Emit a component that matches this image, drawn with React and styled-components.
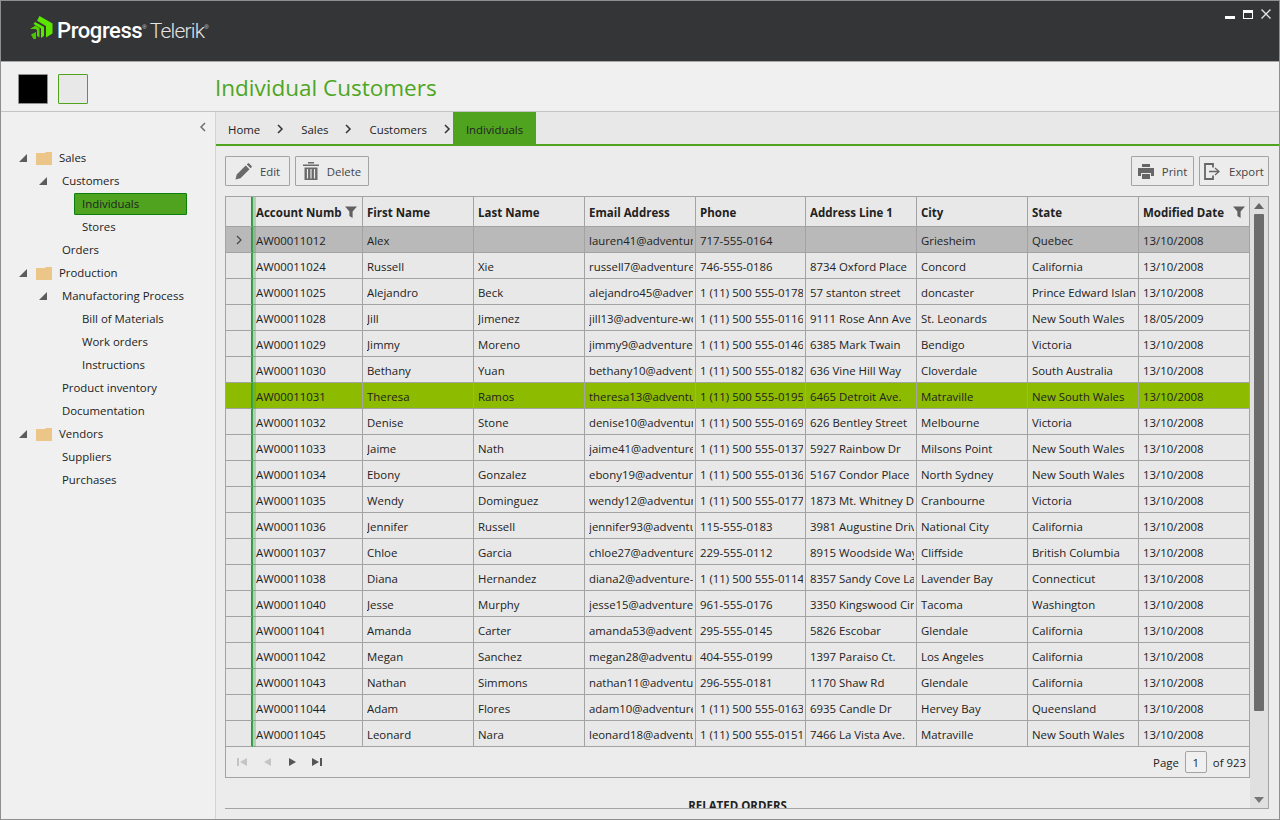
import React from "react";
import styled, { createGlobalStyle } from "styled-components";

const GlobalStyle = createGlobalStyle`
  html, body {
    margin: 0;
    padding: 0;
    height: 100%;
    overflow: hidden;
    background: #f0f0f0;
  }
  body, input, button {
    font-family: "Open Sans", "Noto Sans", sans-serif;
  }
`;

const WindowFrame = styled.div`
  width: 1280px;
  height: 820px;
  box-sizing: border-box;
  border: 1px solid #8f8f8f;
  display: flex;
  flex-direction: column;
  overflow: hidden;
  background: #f0f0f0;
`;

const TitleBar = styled.header`
  height: 60px;
  flex: none;
  background: #343537;
  display: flex;
  align-items: flex-start;
  justify-content: space-between;
`;

const Logo = styled.div`
  display: flex;
  align-items: flex-start;
  margin: 15px 0 0 29px;
  color: #fff;
`;

const LogoProgress = styled.span`
  font-family: "Roboto", "Liberation Sans", sans-serif;
  font-size: 22px;
  line-height: 30px;
  font-weight: 500;
  letter-spacing: -0.4px;
  margin-left: 4px;
`;

const LogoTelerik = styled.span`
  font-family: "Roboto", "Liberation Sans", sans-serif;
  font-size: 21px;
  line-height: 30px;
  font-weight: 300;
  letter-spacing: -0.8px;
  margin-left: 3px;
  color: #e4e4e4;
`;

const LogoMark = styled.span`
  font-family: "Liberation Sans", sans-serif;
  font-size: 6px;
  color: #d8d8d8;
  margin: 8px 0 0 0;
  line-height: 1;
`;

const WindowButtons = styled.div`
  display: flex;
  align-items: center;
  gap: 6px;
  margin: 7px 7px 0 0;
`;

const HeaderBand = styled.div`
  height: 51px;
  flex: none;
  box-sizing: border-box;
  border-top: 1px solid #a8a8a8;
  border-bottom: 1px solid #c4c4c4;
  display: flex;
  align-items: center;
  padding: 5px 0 0 17px;
`;

const Swatch = styled.div`
  width: 30px;
  height: 30px;
  box-sizing: border-box;
  border: 1px solid ${(p) => p.$border};
  border-radius: 1px;
  background: ${(p) => p.$color};
  margin-right: 10px;
`;

const PageTitle = styled.h1`
  margin: -2px 0 0 117px;
  font-size: 22.5px;
  font-weight: 400;
  color: #4ea61e;
  line-height: 1;
`;

const Body = styled.div`
  flex: 1;
  min-height: 0;
  display: flex;
`;

const Sidebar = styled.aside`
  width: 215px;
  flex: none;
  box-sizing: border-box;
  border-right: 1px solid #d4d4d4;
  padding-top: 34px;
  position: relative;
  background: #f0f0f0;
`;

const CollapseButton = styled.div`
  position: absolute;
  top: 10px;
  right: 8px;
  display: flex;
`;

const TreeRow = styled.div`
  height: 23px;
  display: flex;
  align-items: center;
  padding-left: ${(p) => p.$indent}px;
  font-size: 11.4px;
  color: #222;
`;

const TreeArrow = styled.svg`
  width: 8px;
  height: 8px;
  flex: none;
  margin-right: ${(p) => p.$gap}px;
`;

const FolderIcon = styled.svg`
  width: 16px;
  height: 14px;
  flex: none;
  margin-right: 7px;
`;

const SelectedTree = styled.div`
  width: 113px;
  height: 22px;
  box-sizing: border-box;
  border: 1px solid #0b7f0b;
  background: #4fa31e;
  padding-left: 7px;
  display: flex;
  align-items: center;
  border-radius: 1px;
`;

const Main = styled.main`
  flex: 1;
  min-width: 0;
  display: flex;
  flex-direction: column;
  background: #ececec;
`;

const Breadcrumb = styled.nav`
  height: 34px;
  flex: none;
  box-sizing: border-box;
  background: #e8e8e8;
  border-bottom: 2px solid #4fa31e;
  display: flex;
  align-items: stretch;
  padding-left: 12px;
  font-size: 11.4px;
  color: #222;
`;

const Crumb = styled.div`
  display: flex;
  align-items: center;
  padding-top: 2px;
  margin-right: ${(p) => p.$gap}px;
`;

const CrumbChevron = styled.svg`
  width: 8px;
  height: 10px;
  margin-left: 16px;
`;

const ActiveCrumb = styled.div`
  background: #4fa31e;
  width: 83px;
  padding-top: 2px;
  display: flex;
  align-items: center;
  justify-content: center;
`;

const Toolbar = styled.div`
  height: 30px;
  flex: none;
  margin: 10px 10px 0 9px;
  display: flex;
  justify-content: space-between;
`;

const ToolGroup = styled.div`
  display: flex;
  gap: 5px;
`;

const ToolButton = styled.button`
  height: 30px;
  width: ${(p) => p.$width}px;
  box-sizing: border-box;
  padding: 0;
  border: 1px solid #a3a3a3;
  border-radius: 1px;
  background: #ececec;
  color: #444;
  font-size: 11.4px;
  display: flex;
  align-items: center;
  justify-content: center;
  gap: 8px;
`;

const ScrollViewer = styled.div`
  margin: 10px 0 0 9px;
  width: 1044px;
  height: 613px;
  flex: none;
  box-sizing: border-box;
  border-top: 1px solid #a3a3a3;
  border-right: 1px solid #a3a3a3;
  border-bottom: 1px solid #a3a3a3;
  display: flex;
  overflow: hidden;
`;

const ScrollContent = styled.div`
  width: 1025px;
  flex: none;
  display: flex;
  flex-direction: column;
  min-height: 0;
`;

const GridFrame = styled.div`
  height: 581px;
  flex: none;
  box-sizing: border-box;
  border-left: 1px solid #a3a3a3;
  border-right: 1px solid #a3a3a3;
  border-bottom: 1px solid #a3a3a3;
  display: flex;
  flex-direction: column;
`;

const Row = styled.div`
  display: flex;
  height: 26px;
  flex: none;
  box-sizing: border-box;
  border-bottom: 1px solid #a3a3a3;
  background: ${(p) => p.$bg || "#e8e8e8"};
  color: #222;
  font-size: 11.4px;
`;

const HeaderRow = styled(Row)`
  height: 30px;
  font-size: 11.5px;
  font-weight: 700;
  background: #e8e8e8;
`;

const IndicatorCell = styled.div`
  width: 26px;
  flex: none;
  box-sizing: border-box;
  border-right: 1px solid #2e9a3e;
  display: flex;
  align-items: center;
  justify-content: center;
`;

const Cell = styled.div`
  width: ${(p) => p.$width}px;
  flex: none;
  box-sizing: border-box;
  border-right: ${(p) => (p.$last ? "0" : "1px solid #a3a3a3")};
  padding: 1px 2px 0 4px;
  display: flex;
  align-items: center;
  white-space: nowrap;
  position: relative;

  ${(p) =>
    p.$frozen &&
    `&::before {
      content: "";
      position: absolute;
      left: 0;
      top: 0;
      bottom: -1px;
      width: 3px;
      border-left: 1px solid #3fa04f;
      background: rgba(60, 170, 70, 0.33);
    }`}
`;

const CellText = styled.span`
  display: block;
  flex: 1;
  min-width: 0;
  overflow: hidden;
`;

const FilterIcon = styled.svg`
  width: 12px;
  height: 12px;
  flex: none;
  margin: 0 3px;
`;

const Pager = styled.div`
  flex: 1;
  display: flex;
  align-items: center;
  justify-content: space-between;
  padding: 0 3px 0 10px;
  font-size: 11.4px;
  color: #222;
`;

const PagerButtons = styled.div`
  display: flex;
  gap: 13px;
`;

const PageInfo = styled.div`
  display: flex;
  align-items: center;
  gap: 4px;
`;

const PageInput = styled.div`
  width: 22px;
  height: 22px;
  box-sizing: border-box;
  border: 1px solid #a3a3a3;
  border-radius: 2px;
  background: #f0f0f0;
  display: flex;
  align-items: center;
  justify-content: center;
  margin: 0 2px;
`;

const RelatedLabel = styled.div`
  margin-top: 20px;
  text-align: center;
  font-size: 11.5px;
  line-height: 16px;
  font-weight: 700;
  color: #222;
`;

const Scrollbar = styled.div`
  width: 18px;
  flex: none;
  background: #e0e0e0;
  display: flex;
  flex-direction: column;
  align-items: center;
  padding-top: 6px;
  box-sizing: border-box;
`;

const ScrollThumb = styled.div`
  width: 10px;
  height: 497px;
  margin-top: 5px;
  background: #6c6c6c;
  border-radius: 1px;
`;

const ScrollDown = styled.div`
  margin-top: auto;
  margin-bottom: 5px;
  display: flex;
`;

const columns = [
  ["Account Numb", 111, true],
  ["First Name", 111],
  ["Last Name", 111],
  ["Email Address", 111],
  ["Phone", 110],
  ["Address Line 1", 111],
  ["City", 111],
  ["State", 111],
  ["Modified Date", 111, true],
];

const rows = [
  ["AW00011012", "Alex", "", "lauren41@adventure-works.com", "717-555-0164", "", "Griesheim", "Quebec", "13/10/2008"],
  ["AW00011024", "Russell", "Xie", "russell7@adventure-works.com", "746-555-0186", "8734 Oxford Place", "Concord", "California", "13/10/2008"],
  ["AW00011025", "Alejandro", "Beck", "alejandro45@adventure-works.com", "1 (11) 500 555-0178", "57 stanton street", "doncaster", "Prince Edward Island", "13/10/2008"],
  ["AW00011028", "Jill", "Jimenez", "jill13@adventure-works.com", "1 (11) 500 555-0116", "9111 Rose Ann Ave", "St. Leonards", "New South Wales", "18/05/2009"],
  ["AW00011029", "Jimmy", "Moreno", "jimmy9@adventure-works.com", "1 (11) 500 555-0146", "6385 Mark Twain", "Bendigo", "Victoria", "13/10/2008"],
  ["AW00011030", "Bethany", "Yuan", "bethany10@adventure-works.com", "1 (11) 500 555-0182", "636 Vine Hill Way", "Cloverdale", "South Australia", "13/10/2008"],
  ["AW00011031", "Theresa", "Ramos", "theresa13@adventure-works.com", "1 (11) 500 555-0195", "6465 Detroit Ave.", "Matraville", "New South Wales", "13/10/2008"],
  ["AW00011032", "Denise", "Stone", "denise10@adventure-works.com", "1 (11) 500 555-0169", "626 Bentley Street", "Melbourne", "Victoria", "13/10/2008"],
  ["AW00011033", "Jaime", "Nath", "jaime41@adventure-works.com", "1 (11) 500 555-0137", "5927 Rainbow Dr", "Milsons Point", "New South Wales", "13/10/2008"],
  ["AW00011034", "Ebony", "Gonzalez", "ebony19@adventure-works.com", "1 (11) 500 555-0136", "5167 Condor Place", "North Sydney", "New South Wales", "13/10/2008"],
  ["AW00011035", "Wendy", "Dominguez", "wendy12@adventure-works.com", "1 (11) 500 555-0177", "1873 Mt. Whitney Dr", "Cranbourne", "Victoria", "13/10/2008"],
  ["AW00011036", "Jennifer", "Russell", "jennifer93@adventure-works.com", "115-555-0183", "3981 Augustine Drive", "National City", "California", "13/10/2008"],
  ["AW00011037", "Chloe", "Garcia", "chloe27@adventure-works.com", "229-555-0112", "8915 Woodside Way", "Cliffside", "British Columbia", "13/10/2008"],
  ["AW00011038", "Diana", "Hernandez", "diana2@adventure-works.com", "1 (11) 500 555-0114", "8357 Sandy Cove Lane", "Lavender Bay", "Connecticut", "13/10/2008"],
  ["AW00011040", "Jesse", "Murphy", "jesse15@adventure-works.com", "961-555-0176", "3350 Kingswood Circle", "Tacoma", "Washington", "13/10/2008"],
  ["AW00011041", "Amanda", "Carter", "amanda53@adventure-works.com", "295-555-0145", "5826 Escobar", "Glendale", "California", "13/10/2008"],
  ["AW00011042", "Megan", "Sanchez", "megan28@adventure-works.com", "404-555-0199", "1397 Paraiso Ct.", "Los Angeles", "California", "13/10/2008"],
  ["AW00011043", "Nathan", "Simmons", "nathan11@adventure-works.com", "296-555-0181", "1170 Shaw Rd", "Glendale", "California", "13/10/2008"],
  ["AW00011044", "Adam", "Flores", "adam10@adventure-works.com", "1 (11) 500 555-0163", "6935 Candle Dr", "Hervey Bay", "Queensland", "13/10/2008"],
  ["AW00011045", "Leonard", "Nara", "leonard18@adventure-works.com", "1 (11) 500 555-0151", "7466 La Vista Ave.", "Matraville", "New South Wales", "13/10/2008"],
];

const tree = [
  { label: "Sales", indent: 18, arrow: true, folder: true },
  { label: "Customers", indent: 38, arrow: true, gap: 15 },
  { label: "Individuals", indent: 73, selected: true },
  { label: "Stores", indent: 81 },
  { label: "Orders", indent: 61 },
  { label: "Production", indent: 18, arrow: true, folder: true },
  { label: "Manufactoring Process", indent: 38, arrow: true, gap: 15 },
  { label: "Bill of Materials", indent: 81 },
  { label: "Work orders", indent: 81 },
  { label: "Instructions", indent: 81 },
  { label: "Product inventory", indent: 61 },
  { label: "Documentation", indent: 61 },
  { label: "Vendors", indent: 18, arrow: true, folder: true },
  { label: "Suppliers", indent: 61 },
  { label: "Purchases", indent: 61 },
];

function Filter() {
  return (
    <FilterIcon viewBox="0 0 12 12">
      <path d="M0 0.5h12L7.6 5.6V12L4.4 10V5.6z" fill="#5f5f5f" />
    </FilterIcon>
  );
}

function Chevron() {
  return (
    <CrumbChevron viewBox="0 0 8 10">
      <path d="M2 1l4 4-4 4" fill="none" stroke="#333" strokeWidth="1.5" />
    </CrumbChevron>
  );
}

function PageButton({ d, color }) {
  return (
    <svg width="12" height="12" viewBox="0 0 12 12">
      <path d={d} fill={color} />
    </svg>
  );
}

export default function App() {
  return (
    <WindowFrame>
      <GlobalStyle />
      <TitleBar>
        <Logo>
          <svg width="23" height="24" viewBox="0 0 23 24">
            <path d="M9.5 0L22.5 7.5V17.5L16 21.5V10L7 4.8z" fill="#5ce500" />
            <path d="M5 6L14 11V20L11 22V12.5L3.5 8z" fill="#5ce500" />
            <path d="M0 13L5.5 9.5L9.5 12V21.5L7 20V14L5.5 13z" fill="#52d400" />
            <path d="M1 18.5L6 16V23H3.5z" fill="#4bc400" />
          </svg>
          <LogoProgress>Progress</LogoProgress>
          <LogoMark>®</LogoMark>
          <LogoTelerik>Telerik</LogoTelerik>
          <LogoMark>®</LogoMark>
        </Logo>
        <WindowButtons>
          <svg width="12" height="12" viewBox="0 0 12 12">
            <rect x="1" y="8" width="10" height="3" fill="#fff" />
          </svg>
          <svg width="12" height="12" viewBox="0 0 12 12">
            <rect x="1.5" y="2.5" width="9" height="8" fill="none" stroke="#fff" />
            <rect x="1" y="2" width="10" height="3" fill="#fff" />
          </svg>
          <svg width="12" height="12" viewBox="0 0 12 12">
            <path d="M1.5 1.5l9 9M10.5 1.5l-9 9" stroke="#e8e8e8" strokeWidth="1.3" />
          </svg>
        </WindowButtons>
      </TitleBar>
      <HeaderBand>
        <Swatch $color="#000" $border="#8f8f8f" />
        <Swatch $color="#e8e8e8" $border="#4fa31e" />
        <PageTitle>Individual Customers</PageTitle>
      </HeaderBand>
      <Body>
        <Sidebar>
          <CollapseButton>
            <svg width="8" height="10" viewBox="0 0 8 10">
              <path d="M6 1L2 5l4 4" fill="none" stroke="#666" strokeWidth="1.4" />
            </svg>
          </CollapseButton>
          {tree.map((item) => (
            <TreeRow key={item.label} $indent={item.indent}>
              {item.arrow && (
                <TreeArrow viewBox="0 0 8 8" $gap={item.gap || 9}>
                  <path d="M8 0v8H0z" fill="#5c5c5c" />
                </TreeArrow>
              )}
              {item.folder && (
                <FolderIcon viewBox="0 0 16 14">
                  <path d="M0 2h9l1-1h6v13H0z" fill="#ecc688" />
                </FolderIcon>
              )}
              {item.selected ? <SelectedTree>{item.label}</SelectedTree> : item.label}
            </TreeRow>
          ))}
        </Sidebar>
        <Main>
          <Breadcrumb>
            <Crumb $gap={17}>Home<Chevron /></Crumb>
            <Crumb $gap={17}>Sales<Chevron /></Crumb>
            <Crumb $gap={2}>Customers<Chevron /></Crumb>
            <ActiveCrumb>Individuals</ActiveCrumb>
          </Breadcrumb>
          <Toolbar>
            <ToolGroup>
              <ToolButton $width={65}>
                <svg width="17" height="17" viewBox="0 0 17 17">
                  <path d="M0.5 16.5l1.2-5 9-9 3.8 3.8-9 9z M11.8 1.4l1-1a1 1 0 0 1 1.3 0l2.5 2.5a1 1 0 0 1 0 1.3l-1 1z" fill="#6a6a6a" />
                </svg>
                Edit
              </ToolButton>
              <ToolButton $width={74}>
                <svg width="16" height="18" viewBox="0 0 16 18">
                  <path d="M0 2.5h16v1.5H0z M5 0h6v1.5H5z M1.5 5.5h13V18h-13z" fill="#6a6a6a" />
                  <path d="M4.5 7v9.5M8 7v9.5M11.5 7v9.5" stroke="#ececec" strokeWidth="1.2" />
                </svg>
                Delete
              </ToolButton>
            </ToolGroup>
            <ToolGroup>
              <ToolButton $width={63}>
                <svg width="16" height="15" viewBox="0 0 16 15">
                  <path d="M4 0h8v3H4z M0 4h16v8h-3V9H3v3H0z M4 10h8v5H4z" fill="#666" />
                </svg>
                Print
              </ToolButton>
              <ToolButton $width={70}>
                <svg width="17" height="17" viewBox="0 0 17 17">
                  <path d="M9 4.5V1H1v15h8v-3.5" fill="none" stroke="#666" strokeWidth="1.8" />
                  <path d="M5 8.5h9M11 5l4 3.5-4 3.5" fill="none" stroke="#666" strokeWidth="1.3" />
                </svg>
                Export
              </ToolButton>
            </ToolGroup>
          </Toolbar>
          <ScrollViewer>
            <ScrollContent>
              <GridFrame>
                <HeaderRow>
                  <IndicatorCell />
                  {columns.map(([name, width, filter], i) => (
                    <Cell key={name} $width={width} $frozen={i === 0} $last={i === columns.length - 1}>
                      <CellText>{name}</CellText>
                      {filter && <Filter />}
                    </Cell>
                  ))}
                </HeaderRow>
                {rows.map((row, r) => (
                  <Row key={row[0]} $bg={r === 0 ? "#b9b9b9" : r === 6 ? "#8cbb00" : undefined}>
                    <IndicatorCell>
                      {r === 0 && (
                        <svg width="6" height="10" viewBox="0 0 6 10">
                          <path d="M1 1l4 4-4 4" fill="none" stroke="#444" strokeWidth="1.2" />
                        </svg>
                      )}
                    </IndicatorCell>
                    {row.map((value, c) => (
                      <Cell key={c} $width={columns[c][1]} $frozen={c === 0} $last={c === row.length - 1}>
                        <CellText>{value}</CellText>
                      </Cell>
                    ))}
                  </Row>
                ))}
                <Pager>
                  <PagerButtons>
                    <PageButton d="M1 2h2v8H1z M11 2v8L4 6z" color="#c4c4c4" />
                    <PageButton d="M10 2v8L3 6z" color="#c4c4c4" />
                    <PageButton d="M3 2v8l7-4z" color="#555" />
                    <PageButton d="M1 2v8l7-4z M9 2h2v8H9z" color="#555" />
                  </PagerButtons>
                  <PageInfo>
                    Page <PageInput>1</PageInput> of 923
                  </PageInfo>
                </Pager>
              </GridFrame>
              <RelatedLabel>RELATED ORDERS</RelatedLabel>
            </ScrollContent>
            <Scrollbar>
              <svg width="10" height="6" viewBox="0 0 10 6">
                <path d="M5 0l5 6H0z" fill="#666" />
              </svg>
              <ScrollThumb />
              <ScrollDown>
                <svg width="10" height="6" viewBox="0 0 10 6">
                  <path d="M0 0h10L5 6z" fill="#777" />
                </svg>
              </ScrollDown>
            </Scrollbar>
          </ScrollViewer>
        </Main>
      </Body>
    </WindowFrame>
  );
}
